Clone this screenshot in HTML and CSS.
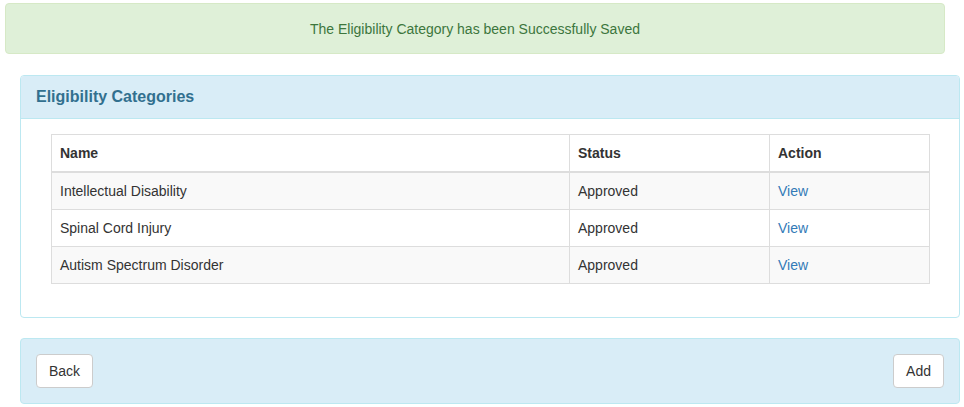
FILE: index.html
```html
<!DOCTYPE html>
<html>
<head>
<meta charset="utf-8">
<link rel="stylesheet" href="styles.css">
</head>
<body>
<div class="alert">The Eligibility Category has been Successfully Saved</div>
<div class="panel">
  <div class="panel-heading">Eligibility Categories</div>
  <div class="panel-body">
    <div class="inner">
      <table class="table">
        <colgroup><col class="c-name"><col class="c-status"><col class="c-action"></colgroup>
        <thead>
          <tr><th>Name</th><th>Status</th><th>Action</th></tr>
        </thead>
        <tbody>
          <tr class="odd"><td>Intellectual Disability</td><td>Approved</td><td><a href="#">View</a></td></tr>
          <tr><td>Spinal Cord Injury</td><td>Approved</td><td><a href="#">View</a></td></tr>
          <tr class="odd"><td>Autism Spectrum Disorder</td><td>Approved</td><td><a href="#">View</a></td></tr>
        </tbody>
      </table>
    </div>
  </div>
</div>
<div class="panel footer">
  <button class="btn">Back</button>
  <button class="btn">Add</button>
</div>
</body>
</html>
```
FILE: styles.css
```css
* { box-sizing: border-box; }
body {
  margin: 0;
  font-family: "Liberation Sans", Arial, sans-serif;
  font-size: 14px;
  line-height: 20px;
  color: #333;
  background: #fff;
}
.alert {
  margin: 3px 0 0 5px;
  width: 940px;
  padding: 15px 15px 14px;
  border: 1px solid #d6e9c6;
  border-radius: 4px;
  background: #dff0d8;
  color: #3c763d;
  text-align: center;
}
.panel {
  margin: 21px 0 0 20px;
  width: 940px;
  border: 1px solid #bce8f1;
  border-radius: 4px;
  background: #fff;
}
.panel-heading {
  padding: 10px 15px;
  background: #d9edf7;
  border-bottom: 1px solid #bce8f1;
  border-radius: 3px 3px 0 0;
  color: #31708f;
  font-size: 16px;
  font-weight: bold;
  line-height: 22px;
}
.panel-body { padding: 15px; }
.inner { padding: 0 15px; }
.table {
  width: 878px;
  border-collapse: collapse;
  border: 1px solid #ddd;
  margin-bottom: 18px;
  table-layout: fixed;
}
.c-name { width: 518px; }
.c-status { width: 200px; }
.c-action { width: 160px; }
.table th, .table td {
  padding: 8px;
  border: 1px solid #ddd;
  text-align: left;
  vertical-align: top;
}
.table th { border-bottom-width: 2px; font-weight: bold; }
.table tr.odd td { background: #f9f9f9; }
.table a { color: #337ab7; text-decoration: none; }
.footer {
  margin-top: 20px;
  background: #d9edf7;
  padding: 15px;
  display: flex;
  justify-content: space-between;
}
.btn {
  font-family: inherit;
  font-size: 14px;
  line-height: 20px;
  padding: 6px 12px;
  color: #333;
  background: #fff;
  border: 1px solid #ccc;
  border-radius: 4px;
}
```
